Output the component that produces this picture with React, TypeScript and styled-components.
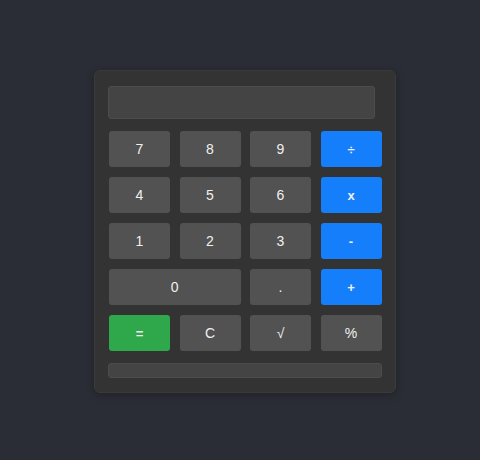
import React from 'react'
import styled, { createGlobalStyle } from 'styled-components'

const GlobalStyle = createGlobalStyle`
    html, body {
        margin: 0;
        padding: 0;
        background: #2a2d35;
        font-family: "Liberation Sans", Arial, sans-serif;
    }
`

type Kind = 'num' | 'op' | 'eq'

type Key = {
    label: string
    kind?: Kind
    wide?: boolean
}

const keys: Array<Key> = [
    { label: '7' }, { label: '8' }, { label: '9' }, { label: '÷', kind: 'op' },
    { label: '4' }, { label: '5' }, { label: '6' }, { label: 'x', kind: 'op' },
    { label: '1' }, { label: '2' }, { label: '3' }, { label: '-', kind: 'op' },
    { label: '0', wide: true }, { label: '.' }, { label: '+', kind: 'op' },
    { label: '=', kind: 'eq' }, { label: 'C' }, { label: '√' }, { label: '%' }
]

const colors: Record<Kind, string> = {
    num: '#525252',
    op: '#157ffb',
    eq: '#2ea84a'
}

export default function App() {
    return (
        <Page>
            <GlobalStyle/>
            <Calculator>
                <Display/>
                <Keypad>
                    {keys.map(key => (
                        <Button
                            key={key.label}
                            $kind={key.kind ?? 'num'}
                            $wide={key.wide}
                        >
                            {key.label}
                        </Button>
                    ))}
                </Keypad>
                <HistoryBar/>
            </Calculator>
        </Page>
    )
}

const Page = styled.div`
    width: 480px;
    height: 460px;
    display: flex;
    justify-content: center;
    align-items: flex-start;
    padding: 70px 0 0 10px;
    box-sizing: border-box;
`

const Calculator = styled.div`
    width: 302px;
    box-sizing: border-box;
    background: #333333;
    border: 1px solid #3a3a3a;
    border-radius: 6px;
    padding: 15px 13px 14px 13px;
    box-shadow: 0 2px 8px rgba(0, 0, 0, 0.25);
`

const Display = styled.div`
    width: 267px;
    height: 33px;
    box-sizing: border-box;
    background: #444444;
    border: 1px solid #4c4c4c;
    border-radius: 3px;
`

const Keypad = styled.div`
    display: grid;
    grid-template-columns: repeat(4, 61px);
    grid-auto-rows: 36px;
    column-gap: 9.5px;
    row-gap: 10px;
    margin: 12px 0 12px 1px;
`

const Button = styled.div<{ $kind: Kind, $wide?: boolean }>`
    grid-column: ${({ $wide }) => $wide ? 'span 2' : 'auto'};
    display: flex;
    justify-content: center;
    align-items: center;
    background: ${({ $kind }) => colors[$kind]};
    border-radius: 3px;
    color: #f0f0f0;
    font-size: 14px;
    ${({ $kind }) => $kind !== 'num' && 'font-weight: bold; font-size: 13px;'}
`

const HistoryBar = styled.div`
    width: 274px;
    height: 15px;
    box-sizing: border-box;
    background: #444444;
    border: 1px solid #4c4c4c;
    border-radius: 3px;
`
